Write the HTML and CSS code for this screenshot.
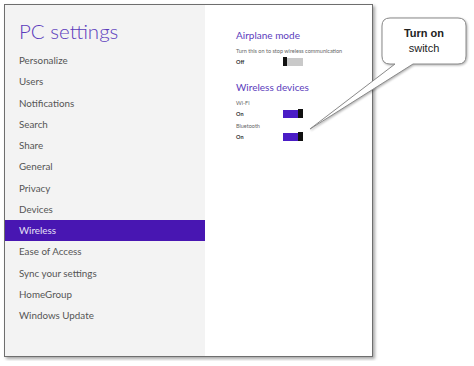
FILE: index.html
```html
<!DOCTYPE html>
<html lang="en">
<head>
  <meta charset="UTF-8">
  <title>PC settings - Wireless</title>
  <link rel="stylesheet" href="styles.css">
</head>
<body>

  <div class="window">
    <div class="sidebar">
      <h1>PC settings</h1>
      <ul class="menu">
        <li>Personalize</li>
        <li>Users</li>
        <li>Notifications</li>
        <li>Search</li>
        <li>Share</li>
        <li>General</li>
        <li>Privacy</li>
        <li>Devices</li>
        <li class="active">Wireless</li>
        <li>Ease of Access</li>
        <li>Sync your settings</li>
        <li>HomeGroup</li>
        <li>Windows Update</li>
      </ul>
    </div>

    <div class="content">
      <h2>Airplane mode</h2>
      <p class="desc">Turn this on to stop wireless communication</p>
      <div class="row">
        <span class="state">Off</span>
        <span class="switch off"><span class="thumb"></span></span>
      </div>

      <h2 class="second">Wireless devices</h2>
      <p class="label">Wi-Fi</p>
      <div class="row">
        <span class="state">On</span>
        <span class="switch on"><span class="thumb"></span></span>
      </div>
      <p class="label">Bluetooth</p>
      <div class="row">
        <span class="state">On</span>
        <span class="switch on"><span class="thumb"></span></span>
      </div>
    </div>
  </div>

  <!-- callout pointing at the bluetooth switch -->
  <div class="callout">
    <svg class="bubble" width="474" height="366" viewBox="0 0 474 366">
      <path d="M390 18 H458 Q466 18 466 26 V56 Q466 64 458 64 H413 L310 129 L395 64 H390 Q382 64 382 56 V26 Q382 18 390 18 Z"
            fill="#ffffff" stroke="#8a8a8a" stroke-width="1"/>
    </svg>
    <div class="callout-text">
      <b>Turn on</b>
      <span>switch</span>
    </div>
  </div>

</body>
</html>
```

FILE: styles.css
```css
body {
  margin: 0;
  padding: 4px;
  background-color: #ffffff;
  font-family: Lato, "Open Sans", sans-serif;
}

.window {
  display: flex;
  width: 369px;
  height: 353px;
  box-sizing: border-box;
  border: 1px solid #6e6e6e;
  box-shadow: 2px 2px 3px rgba(0, 0, 0, 0.35);
  background-color: #ffffff;
}

.sidebar {
  width: 200px;
  background-color: #f3f3f3;
}
.sidebar h1 {
  margin: 0;
  padding: 11px 0 0 14px;
  height: 34px;
  font-size: 20.5px;
  font-weight: 300;
  line-height: 30px;
  color: #5b3cbc;
}
.menu {
  list-style: none;
  margin: 0;
  padding: 0;
}
.menu li {
  height: 21.25px;
  line-height: 21.25px;
  padding-left: 14px;
  font-size: 9.8px;
  color: #555555;
}
.menu li.active {
  background-color: #4816b2;
  color: #e6e0f5;
}

.content {
  flex: 1;
  padding: 23px 0 0 31px;
}
.content h2 {
  margin: 0;
  font-size: 10px;
  font-weight: 400;
  line-height: 14px;
  color: #5b3cbc;
}
.content h2.second {
  margin-top: 13px;
  line-height: 16px;
}
.desc, .label {
  margin: 0;
  font-size: 5.5px;
  line-height: 8px;
  color: #666666;
}
.desc { margin-top: 5px; }
.label { margin-top: 4px; }

.row {
  display: flex;
  align-items: center;
  height: 9px;
  margin-top: 2px;
}
.state {
  width: 47px;
  font-size: 5.5px;
  font-weight: 700;
  color: #333333;
}
.switch {
  display: flex;
  width: 20px;
  height: 8px;
}
.switch.on { background-color: #4a1cc6; justify-content: flex-end; }
.switch.off { background-color: #c9c9c9; }
.thumb {
  width: 5px;
  height: 9px;
  margin-top: -0.5px;
  background-color: #111111;
}
.switch.off .thumb { width: 4px; }

.callout {
  position: absolute;
  top: 0;
  left: 0;
}
.bubble {
  display: block;
  filter: drop-shadow(1px 1px 1px rgba(0, 0, 0, 0.3));
}
.callout-text {
  position: absolute;
  top: 26px;
  left: 382px;
  width: 84px;
  display: flex;
  flex-direction: column;
  align-items: center;
  font-family: "Liberation Sans", Arial, sans-serif;
  font-size: 11px;
  line-height: 15px;
  color: #222222;
}
```
